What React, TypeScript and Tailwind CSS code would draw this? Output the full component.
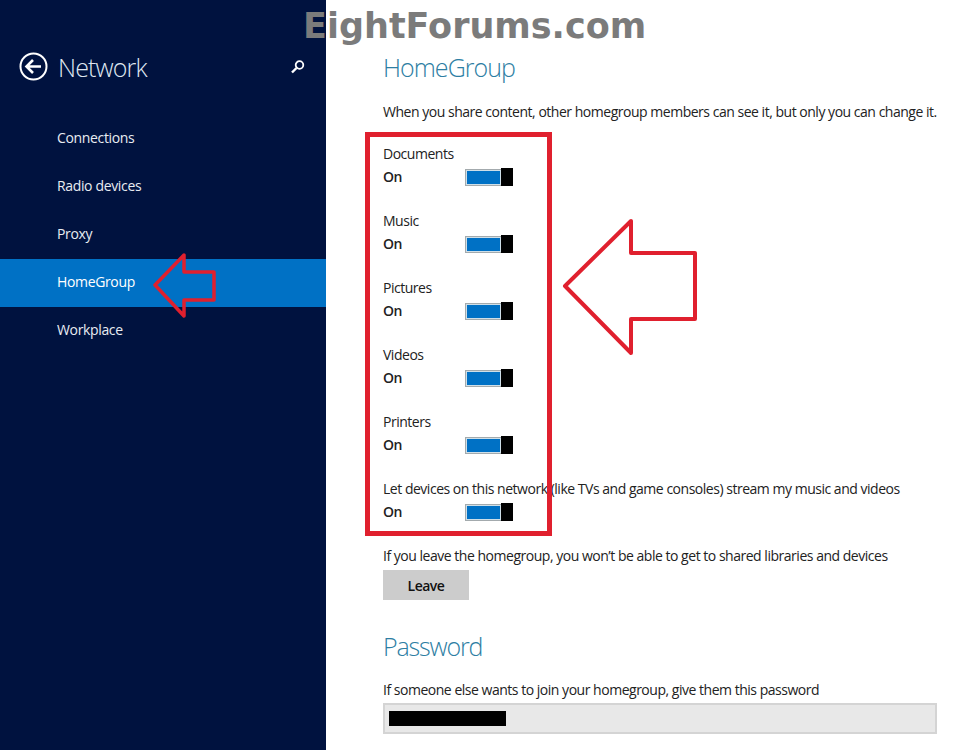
const navItems = ["Connections", "Radio devices", "Proxy", "HomeGroup", "Workplace"];
const toggles = ["Documents", "Music", "Pictures", "Videos", "Printers", "Let devices on this network (like TVs and game consoles) stream my music and videos"];

function Toggle() {
  return (
    <div className="flex h-[18px] w-[48px] items-center">
      <div className="h-[17px] flex-1 border border-r-0 border-[#a3aaad] bg-[#0071c5] shadow-[inset_0_0_0_1px_#cfdfe8]" />
      <div className="h-[18px] w-[12px] bg-black" />
    </div>
  );
}

function RedArrow({ className, width, height, points, stroke }: { className: string; width: number; height: number; points: string; stroke: number }) {
  return (
    <svg className={className} width={width} height={height} viewBox={`0 0 ${width} ${height}`} fill="none">
      <polygon points={points} stroke="#e0202e" strokeWidth={stroke} strokeLinejoin="round" />
    </svg>
  );
}

export default function App() {
  return (
    <div className="relative flex h-[750px] w-[956px] overflow-hidden bg-white font-['Open_Sans','Noto_Sans',sans-serif] text-[#222]">
      <aside className="flex h-full w-[326px] shrink-0 flex-col bg-[#00123f] text-white">
        <div className="flex h-[114px] items-start pl-[19px] pr-[20px] pt-[52px]">
          <svg width="29" height="29" viewBox="0 0 29 29" fill="none" stroke="white" className="shrink-0">
            <circle cx="14.5" cy="14.5" r="13" strokeWidth="2" />
            <path d="M22 14.5H8M14 8l-6.5 6.5L14 21" strokeWidth="2.6" />
          </svg>
          <h1 className="ml-[10px] text-[25px] leading-[30px] font-light tracking-[-0.85px] text-[#dfe6f0]">Network</h1>
          <svg width="16" height="16" viewBox="0 0 16 16" fill="none" stroke="white" className="ml-auto mt-[7px]">
            <circle cx="9.5" cy="6" r="3.8" strokeWidth="1.8" />
            <path d="M6.5 9L2 13.5" strokeWidth="2.4" />
          </svg>
        </div>
        <nav className="flex flex-col pt-[1px]">
          {navItems.map((item) => (
            <div
              key={item}
              className={`flex h-[48px] items-center pb-[3px] pl-[57px] text-[14px] tracking-[-0.35px] ${item === "HomeGroup" ? "bg-[#0071c5] text-white" : "text-[#e8ecf2]"}`}
            >
              {item}
            </div>
          ))}
        </nav>
      </aside>

      <main className="flex flex-1 flex-col pl-[57px] pr-[19px] pt-[51px] text-[14px] tracking-[-0.48px]">
        <h2 className="h-[32px] text-[25px] leading-[32px] font-light tracking-[-0.95px] text-[#2d7ea3]">HomeGroup</h2>
        <p className="mt-[19px] h-[20px] leading-[20px] whitespace-nowrap">When you share content, other homegroup members can see it, but only you can change it.</p>
        <div className="mt-[22px] flex flex-col">
          {toggles.map((label) => (
            <div key={label} className="h-[67px]">
              <div className="h-[20px] leading-[20px] whitespace-nowrap">{label}</div>
              <div className="mt-[3px] flex h-[20px] w-[130px] items-center justify-between font-semibold">
                <span className="pb-[2px]">On</span>
                <Toggle />
              </div>
            </div>
          ))}
        </div>
        <p className="h-[20px] leading-[20px] whitespace-nowrap">If you leave the homegroup, you won’t be able to get to shared libraries and devices</p>
        <button className="mt-[4px] h-[30px] w-[86px] bg-[#cccccc] font-semibold text-[#111]">Leave</button>
        <h2 className="mt-[30px] h-[32px] text-[25px] leading-[32px] font-light tracking-[-1.15px] text-[#2d7ea3]">Password</h2>
        <p className="mt-[18px] h-[20px] leading-[20px] whitespace-nowrap">If someone else wants to join your homegroup, give them this password</p>
        <div className="mt-[3px] flex h-[31px] w-[554px] items-center border-2 border-[#d4d4d4] bg-[#e8e8e8] pl-[4px]">
          <div className="h-[15px] w-[117px] bg-black" />
        </div>
      </main>

      <div className="pointer-events-none absolute left-[303px] top-[4px] font-['DejaVu_Sans',sans-serif] text-[35px] leading-[44px] font-bold whitespace-nowrap text-[#7b7b7b]">EightForums.com</div>
      <div className="pointer-events-none absolute left-[365px] top-[132px] h-[404px] w-[187px] border-[5px] border-[#e0202e]" />
      <RedArrow className="pointer-events-none absolute left-[150px] top-[250px]" width={70} height={70} stroke={3.5} points="5,35 34,5 34,22 64,22 64,50 34,50 34,66" />
      <RedArrow className="pointer-events-none absolute left-[560px] top-[215px]" width={140} height={145} stroke={4} points="5,71 71,6 71,38 135,38 135,104 71,104 71,138" />
    </div>
  );
}
